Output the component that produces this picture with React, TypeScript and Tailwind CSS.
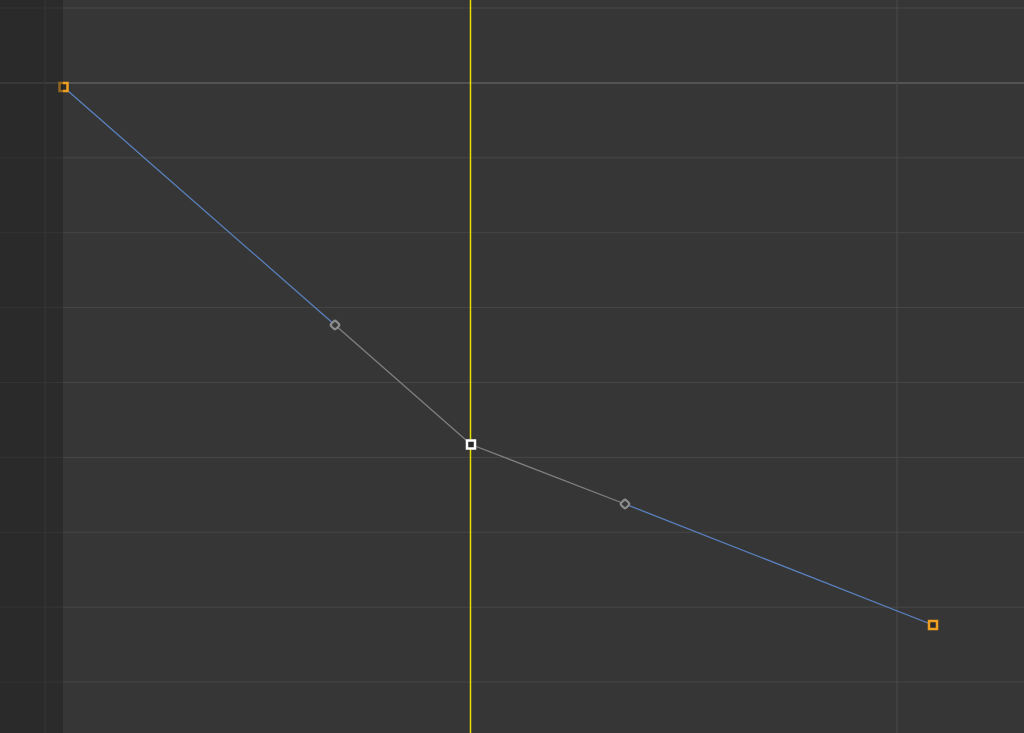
import React from 'react';

const rows = [8, 157.8, 232.7, 307.6, 382.5, 457.4, 532.3, 607.2, 682.1];
const cols = [45, 897];

const Key = ({ x, y, color }: { x: number; y: number; color: string }) => (
  <rect x={x - 4} y={y - 4} width={8} height={8} fill="#2a2a2a" stroke={color} strokeWidth={2.5} />
);

const Handle = ({ x, y }: { x: number; y: number }) => (
  <rect
    x={x - 3.5}
    y={y - 3.5}
    width={7}
    height={7}
    rx={2}
    fill="#3a3a3a"
    stroke="#8c8c8c"
    strokeWidth={2.2}
    transform={`rotate(45 ${x} ${y})`}
  />
);

const App: React.FC = () => {
  return (
    <div className="relative w-[1024px] h-[733px] overflow-hidden bg-[#363636]">
      {/* Graph canvas */}
      <svg width={1024} height={733} className="block">
        {rows.map((y) => (
          <line key={y} x1={0} x2={1024} y1={y} y2={y} stroke="#474747" strokeWidth={1} />
        ))}
        <line x1={0} x2={1024} y1={83} y2={83} stroke="#5e5e5e" strokeWidth={1.5} />
        {cols.map((x) => (
          <line key={x} x1={x} x2={x} y1={0} y2={733} stroke="#4a4a4a" strokeWidth={1} />
        ))}

        {/* curve + handle lines */}
        <line x1={63.5} y1={87} x2={335} y2={325} stroke="#5a82c0" strokeWidth={1.3} />
        <polyline points="335,325 471,444.5 625,504" fill="none" stroke="#808080" strokeWidth={1.3} />
        <line x1={625} y1={504} x2={933} y2={625} stroke="#5a82c0" strokeWidth={1.3} />

        {/* playhead */}
        <line x1={470.5} x2={470.5} y1={0} y2={733} stroke="#e6e000" strokeWidth={1.5} />

        <Handle x={335} y={325} />
        <Handle x={625} y={504} />
        <Key x={63.5} y={87} color="#f0a020" />
        <Key x={471} y={444.5} color="#ffffff" />
        <Key x={933} y={625} color="#f0a020" />
      </svg>

      {/* out-of-range shading */}
      <div className="absolute inset-y-0 left-0 flex">
        <div className="w-[45px] bg-[#1e1e1e]/50" />
        <div className="w-[18px] bg-[#1e1e1e]/45" />
      </div>
    </div>
  );
};

export default App;
